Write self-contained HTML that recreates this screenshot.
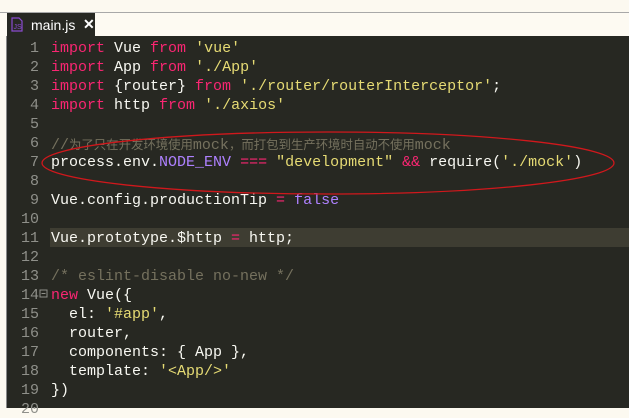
<!DOCTYPE html><html><head><style>
body{margin:0;width:629px;height:408px;overflow:hidden;background:#fcf9f0;position:relative;font-family:"Liberation Mono","Noto Sans CJK SC",monospace}
.top{position:absolute;left:0;top:0;width:629px;height:12px;background:#fcf9f0;border-bottom:1px solid #a8a8a8}
.tabbar{position:absolute;left:0;top:13px;width:629px;height:23px;background:#fdfaf2}
.tab{position:absolute;left:7px;top:13px;width:88px;height:24px;background:#272822;color:#fff;font-family:"Liberation Sans",sans-serif;font-size:14px}
.ed{position:absolute;left:6px;top:36px;width:623px;height:372px;background:#272822;border-left:1px solid #888}
.ln{position:absolute;left:7px;width:32px;text-align:right;color:#8f908a;font-size:15px}
.cd{position:absolute;left:51px;white-space:pre;color:#f8f8f2;font-size:15px}
.k{color:#f92672}.s{color:#e6db74}.c{color:#75715e}.p{color:#ae81ff}
.z{font-family:"Noto Sans CJK SC",sans-serif;font-size:12.4px}
</style></head><body>
<div class="top"></div><div class="tabbar"></div>
<div class="tab"><svg style="position:absolute;left:4px;top:4px" width="12" height="15"><path d="M1 1H8L11 4V14H1Z" fill="none" stroke="#8a4bd0" stroke-width="1.2"/><text x="2.5" y="12" font-size="7" fill="#8a4bd0" font-family="Liberation Sans">JS</text></svg><span style="position:absolute;left:24px;top:4px">main.js</span><span style="position:absolute;left:76px;top:3px;font-weight:bold;font-size:14px">✕</span></div>
<div class="ed"></div>
<div style="position:absolute;left:50px;top:228px;width:579px;height:19px;background:#3e3d32"></div>
<div id="g"></div>
<svg style="position:absolute;left:0;top:0" width="629" height="408"><ellipse cx="328" cy="163" rx="286" ry="31" fill="none" stroke="#d0181c" stroke-width="1.3"/><rect x="40" y="290" width="7" height="7" fill="none" stroke="#8f908a"/><line x1="41.5" y1="293.5" x2="45.5" y2="293.5" stroke="#8f908a"/></svg>
<script>
var L=[
'<span class="k">import</span> Vue <span class="k">from</span> <span class="s">\'vue\'</span>',
'<span class="k">import</span> App <span class="k">from</span> <span class="s">\'./App\'</span>',
'<span class="k">import</span> {router} <span class="k">from</span> <span class="s">\'./router/routerInterceptor\'</span>;',
'<span class="k">import</span> http <span class="k">from</span> <span class="s">\'./axios\'</span>',
'',
'<span class="c">//<span class="z">为了只在开发环境使用</span>mock<span class="z">，而打包到生产环境时自动不使用</span>mock</span>',
'process.env.<span class="p">NODE_ENV</span> <span class="k">===</span> <span class="s">"development"</span> <span class="k">&amp;&amp;</span> require(<span class="s">\'./mock\'</span>)',
'',
'Vue.config.productionTip <span class="k">=</span> <span class="p">false</span>',
'',
'Vue.prototype.$http <span class="k">=</span> http;',
'',
'<span class="c">/* eslint-disable no-new */</span>',
'<span class="k">new</span> Vue({',
'  el: <span class="s">\'#app\'</span>,',
'  router,',
'  components: { App },',
'  template: <span class="s">\'&lt;App/&gt;\'</span>',
'})',
''];
var h='';for(var i=0;i<20;i++){var t=40+i*19;h+='<div class="ln" style="top:'+t+'px">'+(i+1)+'</div><div class="cd" style="top:'+t+'px;height:19px">'+L[i]+'</div>';}
document.getElementById('g').innerHTML=h;
</script>
</body></html>
